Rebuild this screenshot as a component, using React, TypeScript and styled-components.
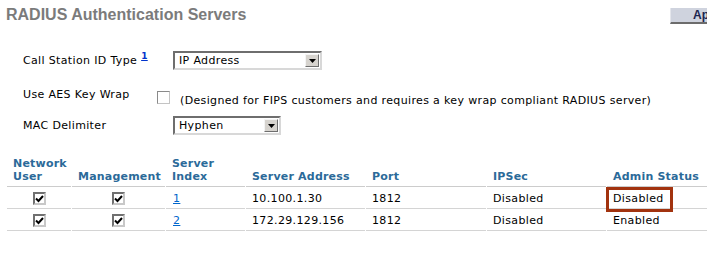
import React from 'react';
import styled, { createGlobalStyle } from 'styled-components';

const GlobalStyle = createGlobalStyle`
  html, body {
    margin: 0;
    padding: 0;
    background: #fff;
    overflow: hidden;
  }
  body {
    font-family: "DejaVu Sans", Verdana, sans-serif;
    font-size: 11px;
    letter-spacing: 0.35px;
    color: #000;
  }
`;

const Page = styled.div`
  width: 750px;
`;

const Header = styled.div`
  display: flex;
  align-items: flex-start;
  justify-content: space-between;
  height: 40px;
  padding: 6px 0 0 6px;
  box-sizing: border-box;
`;

const Title = styled.h1`
  margin: 0;
  font-family: "Liberation Sans", Arial, sans-serif;
  font-size: 16px;
  font-weight: bold;
  letter-spacing: 0;
  color: #7b7b7b;
  line-height: 18px;
`;

const ApplyButton = styled.button`
  margin-top: 2px;
  height: 16px;
  width: 80px;
  padding: 0 0 0 22px;
  text-align: left;
  border: 0;
  border-bottom: 2px solid #6c6c6c;
  border-left: 1px solid #e4e6ec;
  background: #cfd3de;
  font-family: "Liberation Sans", Arial, sans-serif;
  font-size: 12px;
  font-weight: bold;
  color: #1c2550;
  line-height: 14px;
`;

const Form = styled.div`
  padding-left: 23px;
  display: flex;
  flex-direction: column;
`;

const Row = styled.div<{ $top: number; $align?: string }>`
  display: flex;
  align-items: ${({ $align }) => $align || 'center'};
  margin-top: ${({ $top }) => $top}px;
`;

const Label = styled.div`
  width: 134px;
  flex: none;
  line-height: 13px;
`;

const Sup = styled.a`
  position: relative;
  top: -5px;
  margin-left: 4px;
  font-size: 9px;
  font-weight: bold;
  color: #0033cc;
  text-decoration: underline;
`;

const SelectBox = styled.div<{ $width: number }>`
  display: flex;
  align-items: center;
  justify-content: space-between;
  width: ${({ $width }) => $width}px;
  height: 19px;
  margin-left: 16px;
  box-sizing: border-box;
  border: 2px solid;
  border-color: #6e6e6e #d8d8d8 #d8d8d8 #6e6e6e;
  background: #fff;
  padding: 0 1px 0 4px;
`;

const SelectText = styled.span`
  line-height: 13px;
`;

const ArrowButton = styled.span`
  width: 14px;
  height: 13px;
  box-sizing: border-box;
  background: #d6d3ce;
  border: 1px solid;
  border-color: #f4f4f4 #6e6e6e #6e6e6e #f4f4f4;
  display: flex;
  align-items: center;
  justify-content: center;
`;

const Check = styled.span<{ $checked?: boolean }>`
  display: inline-flex;
  align-items: center;
  justify-content: center;
  width: 13px;
  height: 13px;
  box-sizing: border-box;
  background: #fff;
  border: ${({ $checked }) => ($checked ? '2px solid' : '1px solid')};
  border-color: ${({ $checked }) =>
    $checked ? '#707070 #c8c8c8 #c8c8c8 #707070' : '#8a8a8a #c4c4c4 #c4c4c4 #8a8a8a'};
  vertical-align: middle;
`;

const AesGroup = styled.div`
  display: flex;
  align-items: flex-start;
  margin-top: 1px;
  ${Check} {
    margin-top: 2px;
  }
`;

const Note = styled.span`
  margin: 5px 0 0 10px;
  line-height: 13px;
`;

const Table = styled.table`
  margin: 22px 0 0 6px;
  border-collapse: separate;
  border-spacing: 1px 0;
  table-layout: fixed;
`;

const Th = styled.th<{ $w: number }>`
  width: ${({ $w }) => $w}px;
  padding: 0 0 3px 6px;
  text-align: left;
  vertical-align: bottom;
  font-weight: bold;
  letter-spacing: 0.2px;
  color: #2b6a99;
  line-height: 13px;
  border-bottom: 1px solid #cccccc;
`;

const Td = styled.td<{ $center?: boolean }>`
  height: 19px;
  padding: 2px 0 0 ${({ $center }) => ($center ? '0' : '6px')};
  text-align: ${({ $center }) => ($center ? 'center' : 'left')};
  vertical-align: middle;
  border-bottom: 1px solid #d4d4d4;
  line-height: 13px;
`;

const IndexLink = styled.a`
  color: #0066cc;
  text-decoration: underline;
  margin-left: 1px;
`;

const Highlight = styled.span`
  position: relative;
  display: inline-block;
  &::after {
    content: '';
    position: absolute;
    top: -5px;
    left: -7px;
    right: -9px;
    bottom: -7px;
    border: 3px solid #a2330f;
  }
`;

const Arrow = () => (
  <svg width="7" height="4" viewBox="0 0 7 4">
    <path d="M0 0h7L3.5 4z" fill="#000" />
  </svg>
);

const Tick = () => (
  <svg width="9" height="8" viewBox="0 0 9 8">
    <path d="M1 3.5l2.5 2.5L8 1" fill="none" stroke="#000" strokeWidth="2" />
  </svg>
);

const servers = [
  { index: 1, address: '10.100.1.30', port: 1812, ipsec: 'Disabled', admin: 'Disabled', mark: true },
  { index: 2, address: '172.29.129.156', port: 1812, ipsec: 'Disabled', admin: 'Enabled', mark: false },
];

const App = () => {
  return (
    <Page>
      <GlobalStyle />
      <Header>
        <Title>RADIUS Authentication Servers</Title>
        <ApplyButton>Apply</ApplyButton>
      </Header>
      <Form>
        <Row $top={11}>
          <Label>
            Call Station ID Type<Sup href="#">1</Sup>
          </Label>
          <SelectBox $width={149}>
            <SelectText>IP Address</SelectText>
            <ArrowButton><Arrow /></ArrowButton>
          </SelectBox>
        </Row>
        <Row $top={18} $align="flex-start">
          <Label>Use AES Key Wrap</Label>
          <AesGroup>
            <Check />
            <Note>(Designed for FIPS customers and requires a key wrap compliant RADIUS server)</Note>
          </AesGroup>
        </Row>
        <Row $top={9}>
          <Label>MAC Delimiter</Label>
          <SelectBox $width={108}>
            <SelectText>Hyphen</SelectText>
            <ArrowButton><Arrow /></ArrowButton>
          </SelectBox>
        </Row>
      </Form>
      <Table>
        <thead>
          <tr>
            <Th $w={58}>Network<br />User</Th>
            <Th $w={87}>Management</Th>
            <Th $w={73}>Server<br />Index</Th>
            <Th $w={113}>Server Address</Th>
            <Th $w={114}>Port</Th>
            <Th $w={113}>IPSec</Th>
            <Th $w={120}>Admin Status</Th>
          </tr>
        </thead>
        <tbody>
          {servers.map((s) => (
            <tr key={s.index}>
              <Td $center><Check $checked><Tick /></Check></Td>
              <Td $center><Check $checked><Tick /></Check></Td>
              <Td><IndexLink href="#">{s.index}</IndexLink></Td>
              <Td>{s.address}</Td>
              <Td>{s.port}</Td>
              <Td>{s.ipsec}</Td>
              <Td>{s.mark ? <Highlight>{s.admin}</Highlight> : s.admin}</Td>
            </tr>
          ))}
        </tbody>
      </Table>
    </Page>
  );
};

export default App;
